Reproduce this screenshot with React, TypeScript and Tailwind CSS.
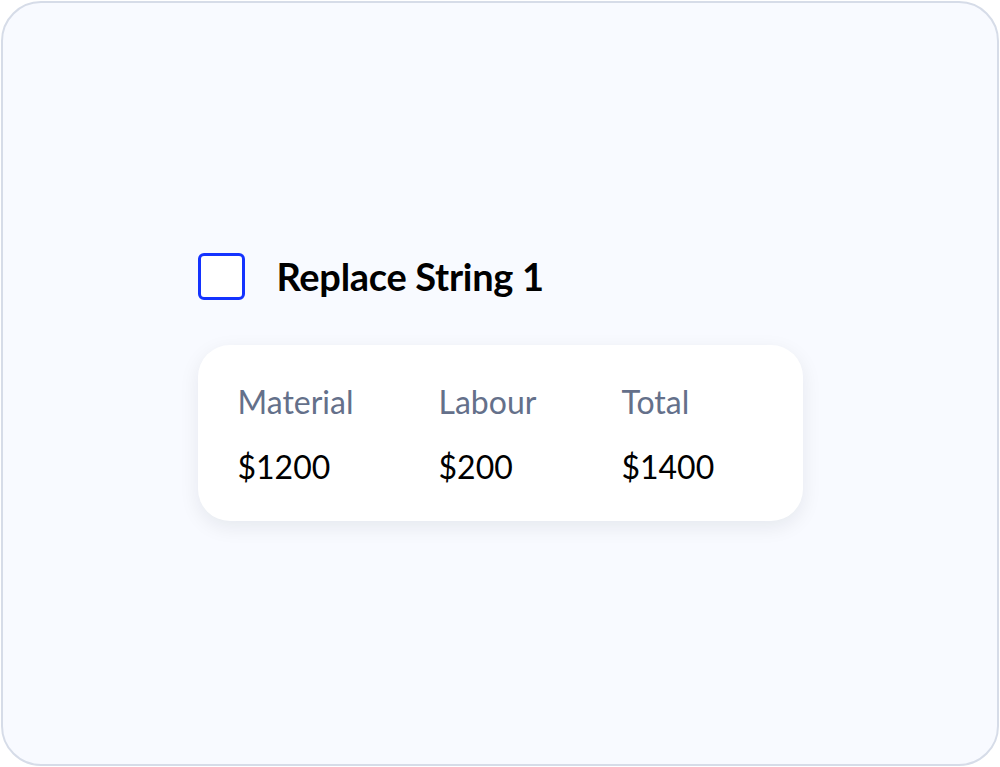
import React from "react";

export default function App() {
  const items = [
    { label: "Material", value: "$1200" },
    { label: "Labour", value: "$200" },
    { label: "Total", value: "$1400" },
  ];
  return (
    <div className="w-[1000px] h-[767px] p-px bg-white" style={{ fontFamily: "Lato, 'Noto Sans', sans-serif" }}>
      <div className="w-full h-full rounded-[40px] border-2 border-[#d6dce8] bg-[#f8faff] flex items-center justify-center">
        <div className="w-[605px] flex flex-col gap-[45px] mt-[6px]">
          <div className="flex items-center gap-[32px]">
            <div className="w-[47px] h-[47px] rounded-[6px] border-[3px] border-[#1433ff] bg-white" />
            <div className="text-[38px] font-bold text-black leading-none tracking-[-0.3px]">Replace String 1</div>
          </div>
          <div className="bg-white rounded-[32px] shadow-[0_6px_20px_rgba(15,23,42,0.08)] px-[40px] pt-[39px] pb-[36px] flex gap-[85px]">
            {items.map((it) => (
              <div key={it.label} className="flex flex-col gap-[29px]">
                <div className="text-[32px] leading-[36px] text-[#64708a]">{it.label}</div>
                <div className="text-[32px] leading-[36px] text-black">{it.value}</div>
              </div>
            ))}
          </div>
        </div>
      </div>
    </div>
  );
}
